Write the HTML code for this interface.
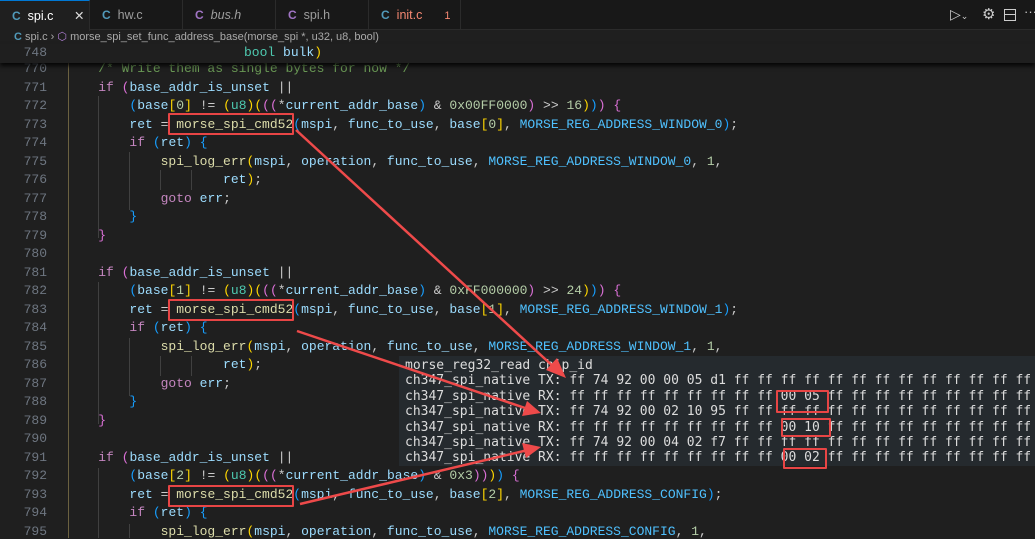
<!DOCTYPE html>
<html><head><meta charset="utf-8"><style>
*{margin:0;padding:0;box-sizing:border-box}
body{width:1035px;height:538px;overflow:hidden;background:#1f1f1f;position:relative;font-family:"Liberation Sans",sans-serif}
#tabs{position:absolute;left:0;top:0;width:1035px;height:30px;background:#181818;border-bottom:1px solid #2b2b2b}
.tab{position:absolute;top:0;height:30px;border-right:1px solid #2b2b2b;font-size:12.5px;color:#9d9d9d;line-height:30px;padding-left:12px}
.tab b{font-weight:bold;margin-right:7px;font-size:12px}
.tab.act{background:#1f1f1f;color:#fff;border-top:1px solid #0078d4;height:31px}
#bc{position:absolute;top:29px;left:0;width:1035px;height:20px;font-size:11px;color:#a9a9a9;line-height:12px;padding:0 0 0 14px}
.code{font-family:"Liberation Mono",monospace;font-size:13px;white-space:pre}
.ln{position:absolute;left:0;width:47px;text-align:right;color:#6e7681}
.l{position:absolute;left:67px;color:#cccccc}
#sticky{position:absolute;top:44px;left:0;width:1035px;height:19px;background:#1f1f1f;box-shadow:0 3px 4px #000c;z-index:3}
.k{color:#c586c0}.v{color:#9cdcfe}.f{color:#dcdcaa}.m{color:#4fc1ff}.c{color:#6a9955}.n{color:#b5cea8}.t{color:#4ec9b0}.y{color:#ffd700}.p{color:#da70d6}.b{color:#179fff}
.g{position:absolute;width:1px;background:#404040}
#term{position:absolute;left:399px;top:356px;width:640px;height:110px;background:#252a2e;z-index:5;font-family:"DejaVu Sans Mono",monospace;font-size:13px;line-height:15.4px;color:#dcdcdc;white-space:pre;padding:2px 0 0 6px;overflow:hidden}
.rb{position:absolute;border:2px solid #e84545;z-index:6;border-radius:1px}
</style></head><body>
<div id="tabs">
<div class="tab act" style="left:0;width:90px"><b style="color:#519aba">C</b>spi.c<span style="position:absolute;left:74px;color:#ddd">✕</span></div>
<div class="tab" style="left:90px;width:93px"><b style="color:#519aba">C</b>hw.c</div>
<div class="tab" style="left:183px;width:93px"><b style="color:#a074c4">C</b><i>bus.h</i></div>
<div class="tab" style="left:276px;width:93px"><b style="color:#a074c4">C</b>spi.h</div>
<div class="tab" style="left:369px;width:92px;color:#f48771"><b style="color:#519aba">C</b>init.c<span style="margin-left:22px;font-size:11px">1</span></div>
<div style="position:absolute;left:950px;top:6px;color:#ccc;font-size:14px">▷<span style="font-size:9px">⌄</span></div>
<div style="position:absolute;left:982px;top:5px;color:#ccc;font-size:15px">⚙</div>
<div style="position:absolute;left:1004px;top:9px;width:12px;height:12px;border:1.5px solid #ccc"><div style="margin-top:4px;border-top:1.5px solid #ccc"></div></div>
<div style="position:absolute;left:1024px;top:4px;color:#ccc;font-size:13px">···</div>
</div>
<div id="bc" style="padding-top:2px"><b style="color:#519aba">C</b> spi.c › <span style="color:#b180d7">⬡</span> morse_spi_set_func_address_base(morse_spi *, u32, u8, bool)</div>
<div id="sticky" class="code"><div class="ln" style="top:1px">748</div><div style="position:absolute;left:244px;top:1px"><span class="t">bool</span> <span class="v">bulk</span><span class="y">)</span></div></div>

<div class="g" style="left:68px;top:62px;height:476px;background:#6b6140"></div>
<div class="g" style="left:98px;top:96px;height:142px"></div>
<div class="g" style="left:129px;top:152px;height:58px"></div>
<div class="g" style="left:160px;top:170px;height:20px"></div>
<div class="g" style="left:191px;top:170px;height:20px"></div>
<div class="g" style="left:98px;top:282px;height:142px"></div>
<div class="g" style="left:129px;top:338px;height:58px"></div>
<div class="g" style="left:160px;top:356px;height:20px"></div>
<div class="g" style="left:191px;top:356px;height:20px"></div>
<div class="g" style="left:98px;top:468px;height:70px"></div>
<div class="g" style="left:129px;top:524px;height:14px"></div>

<div class="code" id="code">
<div class="ln" style="top:61px">770</div><div class="l" style="top:61px">    <span class="c">/* Write them as single bytes for now */</span></div>
<div class="ln" style="top:79.5px">771</div><div class="l" style="top:79.5px">    <span class="k">if</span> <span class="p">(</span><span class="v">base_addr_is_unset</span> ||</div>
<div class="ln" style="top:98px">772</div><div class="l" style="top:98px">        <span class="b">(</span><span class="v">base</span><span class="y">[</span><span class="n">0</span><span class="y">]</span> != <span class="y">(</span><span class="t">u8</span><span class="y">)(</span><span class="p">((</span>*<span class="v">current_addr_base</span><span class="b">)</span> &amp; <span class="n">0x00FF0000</span><span class="p">)</span> &gt;&gt; <span class="n">16</span><span class="y">)</span><span class="b">)</span><span class="p">)</span> <span class="p">{</span></div>
<div class="ln" style="top:116.5px">773</div><div class="l" style="top:116.5px">        <span class="v">ret</span> = <span class="f">morse_spi_cmd52</span><span class="b">(</span><span class="v">mspi</span>, <span class="v">func_to_use</span>, <span class="v">base</span><span class="y">[</span><span class="n">0</span><span class="y">]</span>, <span class="m">MORSE_REG_ADDRESS_WINDOW_0</span><span class="b">)</span>;</div>
<div class="ln" style="top:135px">774</div><div class="l" style="top:135px">        <span class="k">if</span> <span class="b">(</span><span class="v">ret</span><span class="b">)</span> <span class="b">{</span></div>
<div class="ln" style="top:153.5px">775</div><div class="l" style="top:153.5px">            <span class="f">spi_log_err</span><span class="y">(</span><span class="v">mspi</span>, <span class="v">operation</span>, <span class="v">func_to_use</span>, <span class="m">MORSE_REG_ADDRESS_WINDOW_0</span>, <span class="n">1</span>,</div>
<div class="ln" style="top:172px">776</div><div class="l" style="top:172px">                    <span class="v">ret</span><span class="y">)</span>;</div>
<div class="ln" style="top:190.5px">777</div><div class="l" style="top:190.5px">            <span class="k">goto</span> <span class="v">err</span>;</div>
<div class="ln" style="top:209px">778</div><div class="l" style="top:209px">        <span class="b">}</span></div>
<div class="ln" style="top:227.5px">779</div><div class="l" style="top:227.5px">    <span class="p">}</span></div>
<div class="ln" style="top:246px">780</div>
<div class="ln" style="top:264.5px">781</div><div class="l" style="top:264.5px">    <span class="k">if</span> <span class="p">(</span><span class="v">base_addr_is_unset</span> ||</div>
<div class="ln" style="top:283px">782</div><div class="l" style="top:283px">        <span class="b">(</span><span class="v">base</span><span class="y">[</span><span class="n">1</span><span class="y">]</span> != <span class="y">(</span><span class="t">u8</span><span class="y">)(</span><span class="p">((</span>*<span class="v">current_addr_base</span><span class="b">)</span> &amp; <span class="n">0xFF000000</span><span class="p">)</span> &gt;&gt; <span class="n">24</span><span class="y">)</span><span class="b">)</span><span class="p">)</span> <span class="p">{</span></div>
<div class="ln" style="top:301.5px">783</div><div class="l" style="top:301.5px">        <span class="v">ret</span> = <span class="f">morse_spi_cmd52</span><span class="b">(</span><span class="v">mspi</span>, <span class="v">func_to_use</span>, <span class="v">base</span><span class="y">[</span><span class="n">1</span><span class="y">]</span>, <span class="m">MORSE_REG_ADDRESS_WINDOW_1</span><span class="b">)</span>;</div>
<div class="ln" style="top:320px">784</div><div class="l" style="top:320px">        <span class="k">if</span> <span class="b">(</span><span class="v">ret</span><span class="b">)</span> <span class="b">{</span></div>
<div class="ln" style="top:338.5px">785</div><div class="l" style="top:338.5px">            <span class="f">spi_log_err</span><span class="y">(</span><span class="v">mspi</span>, <span class="v">operation</span>, <span class="v">func_to_use</span>, <span class="m">MORSE_REG_ADDRESS_WINDOW_1</span>, <span class="n">1</span>,</div>
<div class="ln" style="top:357px">786</div><div class="l" style="top:357px">                    <span class="v">ret</span><span class="y">)</span>;</div>
<div class="ln" style="top:375.5px">787</div><div class="l" style="top:375.5px">            <span class="k">goto</span> <span class="v">err</span>;</div>
<div class="ln" style="top:394px">788</div><div class="l" style="top:394px">        <span class="b">}</span></div>
<div class="ln" style="top:412.5px">789</div><div class="l" style="top:412.5px">    <span class="p">}</span></div>
<div class="ln" style="top:431px">790</div>
<div class="ln" style="top:449.5px">791</div><div class="l" style="top:449.5px">    <span class="k">if</span> <span class="p">(</span><span class="v">base_addr_is_unset</span> ||</div>
<div class="ln" style="top:468px">792</div><div class="l" style="top:468px">        <span class="b">(</span><span class="v">base</span><span class="y">[</span><span class="n">2</span><span class="y">]</span> != <span class="y">(</span><span class="t">u8</span><span class="y">)(</span><span class="p">((</span>*<span class="v">current_addr_base</span><span class="b">)</span> &amp; <span class="n">0x3</span><span class="p">))</span><span class="y">)</span><span class="b">)</span> <span class="p">{</span></div>
<div class="ln" style="top:486.5px">793</div><div class="l" style="top:486.5px">        <span class="v">ret</span> = <span class="f">morse_spi_cmd52</span><span class="b">(</span><span class="v">mspi</span>, <span class="v">func_to_use</span>, <span class="v">base</span><span class="y">[</span><span class="n">2</span><span class="y">]</span>, <span class="m">MORSE_REG_ADDRESS_CONFIG</span><span class="b">)</span>;</div>
<div class="ln" style="top:505px">794</div><div class="l" style="top:505px">        <span class="k">if</span> <span class="b">(</span><span class="v">ret</span><span class="b">)</span> <span class="b">{</span></div>
<div class="ln" style="top:523.5px">795</div><div class="l" style="top:523.5px">            <span class="f">spi_log_err</span><span class="y">(</span><span class="v">mspi</span>, <span class="v">operation</span>, <span class="v">func_to_use</span>, <span class="m">MORSE_REG_ADDRESS_CONFIG</span>, <span class="n">1</span>,</div>
</div>

<div id="term">morse_reg32_read chip_id
ch347_spi_native TX: ff 74 92 00 00 05 d1 ff ff ff ff ff ff ff ff ff ff ff ff ff ff
ch347_spi_native RX: ff ff ff ff ff ff ff ff ff 00 05 ff ff ff ff ff ff ff ff ff ff
ch347_spi_native TX: ff 74 92 00 02 10 95 ff ff ff ff ff ff ff ff ff ff ff ff ff ff
ch347_spi_native RX: ff ff ff ff ff ff ff ff ff 00 10 ff ff ff ff ff ff ff ff ff ff
ch347_spi_native TX: ff 74 92 00 04 02 f7 ff ff ff ff ff ff ff ff ff ff ff ff ff ff
ch347_spi_native RX: ff ff ff ff ff ff ff ff ff 00 02 ff ff ff ff ff ff ff ff ff ff</div>

<div class="rb" style="left:168px;top:113px;width:126px;height:22px"></div>
<div class="rb" style="left:168px;top:299px;width:126px;height:22px"></div>
<div class="rb" style="left:168px;top:485px;width:126px;height:22px"></div>
<div class="rb" style="left:776px;top:390px;width:53px;height:23px"></div>
<div class="rb" style="left:781px;top:418px;width:50px;height:19px"></div>
<div class="rb" style="left:783px;top:448px;width:44px;height:21px"></div>

<svg width="1035" height="538" style="position:absolute;left:0;top:0;z-index:7">
<g stroke="#ee4a4a" stroke-width="2.5" fill="none">
<line x1="296" y1="130" x2="556" y2="369"/>
<line x1="297" y1="331" x2="528" y2="409"/>
<line x1="300" y1="504" x2="528" y2="450"/>
</g>
<g fill="#ee4a4a">
<polygon points="566,378 546,370 557,358"/>
<polygon points="541,413 522,416 527,401"/>
<polygon points="541,447 526,458 522,443"/>
</g></svg>
</body></html>
